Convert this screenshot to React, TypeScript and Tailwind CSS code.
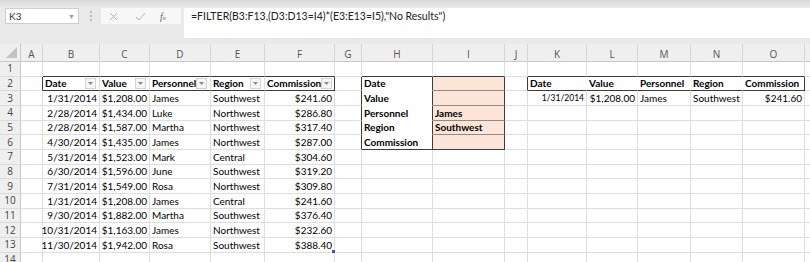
import * as React from 'react';

const COLS = ['A', 'B', 'C', 'D', 'E', 'F', 'G', 'H', 'I', 'J', 'K', 'L', 'M', 'N', 'O'];

const rows = [
  ['1/31/2014', '$1,208.00', 'James', 'Southwest', '$241.60'],
  ['2/28/2014', '$1,434.00', 'Luke', 'Northwest', '$286.80'],
  ['2/28/2014', '$1,587.00', 'Martha', 'Northwest', '$317.40'],
  ['4/30/2014', '$1,435.00', 'James', 'Northwest', '$287.00'],
  ['5/31/2014', '$1,523.00', 'Mark', 'Central', '$304.60'],
  ['6/30/2014', '$1,596.00', 'June', 'Southwest', '$319.20'],
  ['7/31/2014', '$1,549.00', 'Rosa', 'Northwest', '$309.80'],
  ['1/31/2014', '$1,208.00', 'James', 'Central', '$241.60'],
  ['9/30/2014', '$1,882.00', 'Martha', 'Southwest', '$376.40'],
  ['10/31/2014', '$1,163.00', 'James', 'Northwest', '$232.60'],
  ['11/30/2014', '$1,942.00', 'Rosa', 'Southwest', '$388.40'],
];

const headers = ['Date', 'Value', 'Personnel', 'Region', 'Commission'];
const criteria: [string, string][] = [
  ['Date', ''],
  ['Value', ''],
  ['Personnel', 'James'],
  ['Region', 'Southwest'],
  ['Commission', ''],
];

type Cell = {
  text?: string;
  right?: boolean;
  bold?: boolean;
  small?: boolean;
  dropdown?: boolean;
  peach?: boolean;
};

// r = sheet row (1..14), c = column index (0 = A)
function getCell(r: number, c: number): Cell {
  if (r === 2 && c >= 1 && c <= 5) return { text: headers[c - 1], bold: true, dropdown: true };
  if (r >= 3 && r <= 13 && c >= 1 && c <= 5) {
    const v = rows[r - 3][c - 1];
    return { text: v, right: c === 1 || c === 2 || c === 5 };
  }
  if (r >= 2 && r <= 6 && c === 7) return { text: criteria[r - 2][0], bold: true };
  if (r >= 2 && r <= 6 && c === 8) return { text: criteria[r - 2][1], bold: true, peach: true };
  if (r === 2 && c >= 10) return { text: headers[c - 10], bold: true };
  if (r === 3 && c >= 10) {
    const v = rows[0][c - 10];
    return { text: v, right: c === 10 || c === 11 || c === 14, small: c === 10 };
  }
  return {};
}

function borderClasses(r: number, c: number) {
  const inB = c >= 1 && c <= 5;
  const inHI = c === 7 || c === 8;
  const inK = c >= 10 && c <= 14;

  let right = 'border-r-[#dedede]';
  if (r === 2 && (c === 0 || c === 5 || c === 9 || c === 14)) right = 'border-r-[#3c3c3c]';
  if (r >= 2 && r <= 6 && (c === 6 || c === 7 || c === 8)) right = 'border-r-[#3c3c3c]';
  if (r === 2 && c >= 10 && c <= 13) right = 'border-r-transparent';

  let bottom = 'border-b-[#dedede]';
  if (r === 1 && (inB || inHI || inK)) bottom = 'border-b-[#3c3c3c]';
  if (r === 2 && (inB || inK)) bottom = 'border-b-[#3c3c3c]';
  if (r === 6 && inHI) bottom = 'border-b-[#3c3c3c]';
  if (r >= 2 && r <= 5 && c === 7) bottom = 'border-b-transparent';
  if (r >= 2 && r <= 5 && c === 8) bottom = 'border-b-[#8a8a8a]';

  return `${right} ${bottom}`;
}

function Dropdown() {
  return (
    <div className="ml-auto mr-[1px] flex h-[11px] w-[11px] shrink-0 items-center justify-center border border-[#d4d4d4] bg-[#f6f6f6]">
      <svg width="5" height="3" viewBox="0 0 5 3">
        <path d="M0 0 L5 0 L2.5 3 Z" fill="#8a8a8a" />
      </svg>
    </div>
  );
}

export default function App() {
  const sheetRows = Array.from({ length: 14 }, (_, i) => i + 1);

  return (
    <div className="relative h-[262px] w-[810px] overflow-hidden bg-white font-['Lato',sans-serif] text-black">
      {/* Formula bar */}
      <div className="h-[44px] bg-[#e9e9e9]">
        <div className="h-[7px] bg-gradient-to-b from-[#d9d9d9] to-[#e7e7e7]" />
        <div className="flex items-start">
          <div className="ml-[5px] mt-[1px] flex h-[16px] w-[74px] items-center border border-[#cfcfcf] bg-white pl-[3px] pr-[3px] text-[10px] text-[#333]">
            <span>K3</span>
            <span className="ml-auto text-[7px] text-[#9a9a9a]">▼</span>
          </div>
          <div className="ml-[9px] mt-[2px] flex h-[14px] w-[5px] flex-col items-center justify-center gap-[2px]">
            <div className="h-[2px] w-[2px] bg-[#bdbdbd]" />
            <div className="h-[2px] w-[2px] bg-[#bdbdbd]" />
            <div className="h-[2px] w-[2px] bg-[#bdbdbd]" />
          </div>
          <div className="ml-[8px] mt-[1px] flex h-[16px] w-[80px] items-center bg-[#f7f7f7]">
            <svg className="ml-[8px]" width="9" height="9" viewBox="0 0 9 9">
              <path d="M1 1 L8 8 M8 1 L1 8" stroke="#b5b5b5" strokeWidth="1" />
            </svg>
            <svg className="ml-[17px]" width="11" height="9" viewBox="0 0 11 9">
              <path d="M1 5 L4 8 L10 1" stroke="#b5b5b5" strokeWidth="1" fill="none" />
            </svg>
            <span className="ml-[14px] font-['Liberation_Serif',serif] text-[10px] italic text-[#666]">
              f<span className="text-[7px]">x</span>
            </span>
          </div>
          <div className="ml-[3px] mt-[1px] h-[30px] flex-1 bg-white pl-[7px] pt-[1px] text-[10.5px] text-[#222]">
            =FILTER(B3:F13,(D3:D13=I4)*(E3:E13=I5),"No Results")
          </div>
        </div>
      </div>

      {/* Sheet grid */}
      <div className="grid grid-cols-[21px_22px_57px_50px_61px_54px_70px_27px_71px_72px_23px_59px_51px_53px_52px_62px_1fr] grid-rows-[18px] auto-rows-[14.67px]">
        {/* column header row */}
        <div className="relative border-b border-r border-[#c8c8c8] bg-[#efefef]">
          <svg className="absolute bottom-[3px] right-[3px]" width="11" height="11" viewBox="0 0 11 11">
            <path d="M11 0 L11 11 L0 11 Z" fill="#c2c2c2" />
          </svg>
        </div>
        {COLS.map((l) => (
          <div
            key={l}
            className="flex items-center justify-center border-b border-r border-b-[#c8c8c8] border-r-[#d6d6d6] bg-[#efefef] pt-[3px] font-['Open_Sans',sans-serif] text-[10px] text-[#555]"
          >
            {l}
          </div>
        ))}
        <div className="border-b border-[#c8c8c8] bg-[#efefef]" />

        {sheetRows.map((r) => (
          <React.Fragment key={r}>
            <div className="flex items-center justify-center border-b border-r border-b-[#dadada] border-r-[#c8c8c8] bg-[#efefef] font-['Open_Sans',sans-serif] text-[10px] text-[#444]">
              {r}
            </div>
            {COLS.map((_, c) => {
              const cell = getCell(r, c);
              return (
                <div
                  key={c}
                  className={`relative flex items-center overflow-visible whitespace-nowrap border-b border-r px-[2px] leading-none ${borderClasses(r, c)} ${
                    cell.peach ? 'bg-[#fce4d6]' : 'bg-white'
                  } ${cell.right ? 'justify-end' : 'justify-start'} ${cell.bold ? 'font-bold' : ''} ${
                    cell.small ? 'text-[8.5px]' : 'text-[10px]'
                  }`}
                >
                  {cell.text && <span>{cell.text}</span>}
                  {cell.dropdown && <Dropdown />}
                  {r === 13 && c === 5 && (
                    <div className="absolute bottom-[-2px] right-[-2px] h-[4px] w-[4px] bg-[#3b5ba8]" />
                  )}
                </div>
              );
            })}
            <div className="border-b border-[#dedede] bg-white" />
          </React.Fragment>
        ))}
      </div>
    </div>
  );
}
